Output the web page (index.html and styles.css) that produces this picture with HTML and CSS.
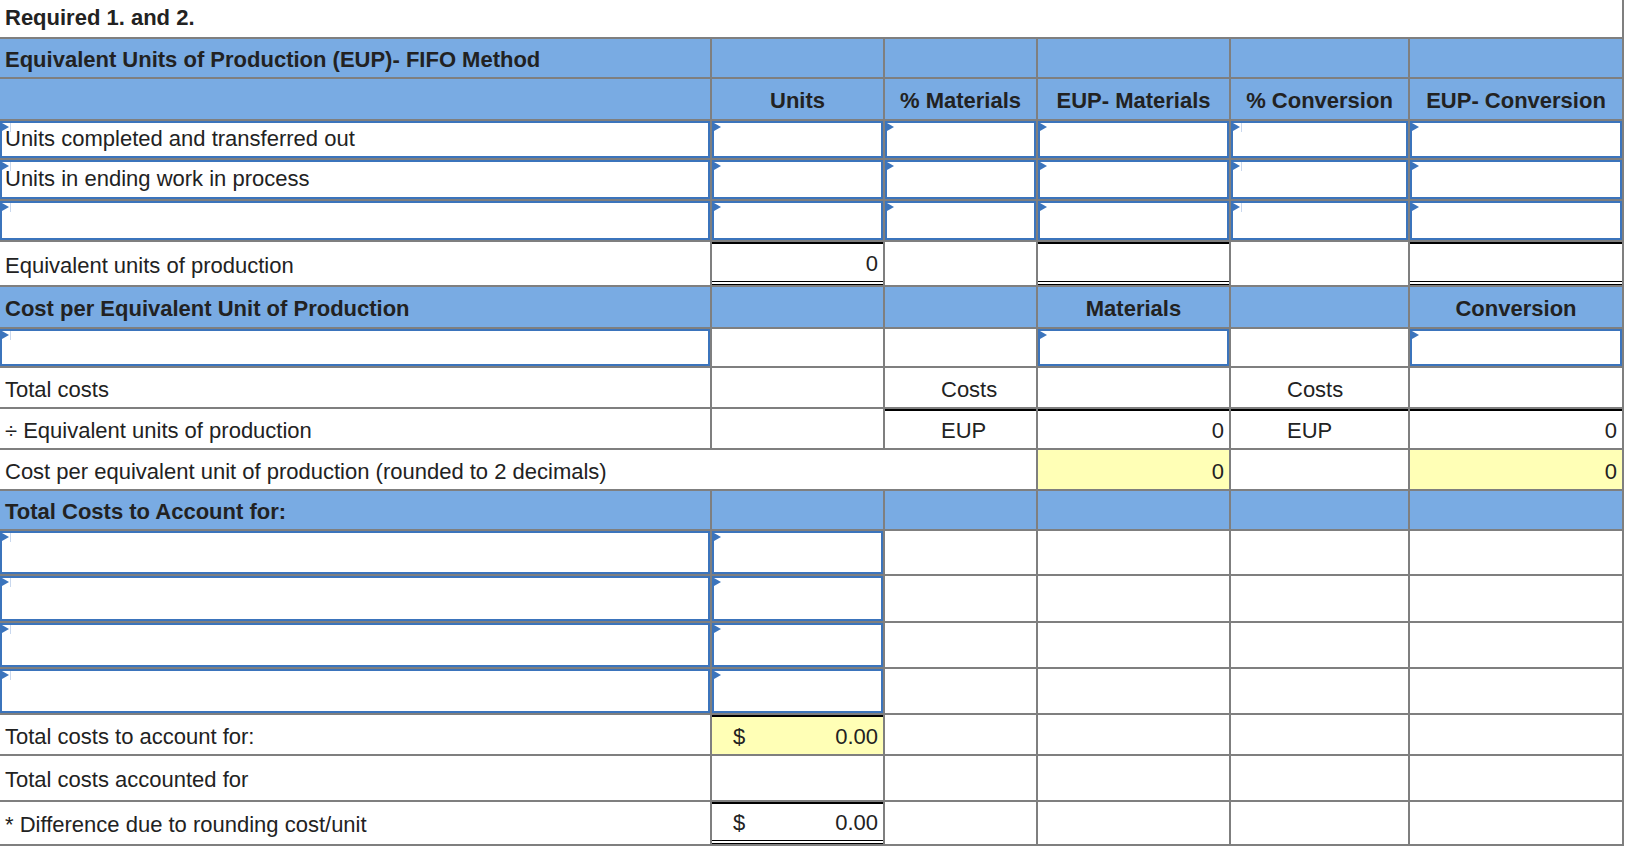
FILE: index.html
```html
<!DOCTYPE html>
<html lang="en">
<head>
<meta charset="utf-8">
<title>Equivalent Units of Production (EUP) - FIFO Method</title>
<link rel="stylesheet" href="styles.css">
</head>
<body>
<div class="sheet">
  <!-- title -->
  <div class="c b title">Required 1. and 2.</div>

  <!-- header 1 -->
  <div class="c h b">Equivalent Units of Production (EUP)- FIFO Method</div>
  <div class="c h"></div><div class="c h"></div><div class="c h"></div><div class="c h"></div><div class="c h"></div>

  <!-- header 2 -->
  <div class="c h"></div>
  <div class="c h b ctr">Units</div>
  <div class="c h b ctr">% Materials</div>
  <div class="c h b ctr">EUP- Materials</div>
  <div class="c h b ctr">% Conversion</div>
  <div class="c h b ctr">EUP- Conversion</div>

  <!-- input rows -->
  <div class="c in caret"><span class="tri"></span>Units completed and transferred out</div>
  <div class="c in"><span class="tri"></span></div>
  <div class="c in"><span class="tri"></span></div>
  <div class="c in"><span class="tri"></span></div>
  <div class="c in caret"><span class="tri"></span></div>
  <div class="c in"><span class="tri"></span></div>

  <div class="c in caret"><span class="tri"></span>Units in ending work in process</div>
  <div class="c in"><span class="tri"></span></div>
  <div class="c in"><span class="tri"></span></div>
  <div class="c in"><span class="tri"></span></div>
  <div class="c in caret"><span class="tri"></span></div>
  <div class="c in"><span class="tri"></span></div>

  <div class="c in caret"><span class="tri"></span></div>
  <div class="c in"><span class="tri"></span></div>
  <div class="c in"><span class="tri"></span></div>
  <div class="c in"><span class="tri"></span></div>
  <div class="c in caret"><span class="tri"></span></div>
  <div class="c in"><span class="tri"></span></div>

  <!-- EUP total -->
  <div class="c">Equivalent units of production</div>
  <div class="c r tl dbl">0</div>
  <div class="c"></div>
  <div class="c tl dbl"></div>
  <div class="c"></div>
  <div class="c tl dbl"></div>

  <!-- Cost per EUP header -->
  <div class="c h b">Cost per Equivalent Unit of Production</div>
  <div class="c h"></div>
  <div class="c h"></div>
  <div class="c h b ctr">Materials</div>
  <div class="c h"></div>
  <div class="c h b ctr">Conversion</div>

  <div class="c in caret"><span class="tri"></span></div>
  <div class="c"></div>
  <div class="c"></div>
  <div class="c in"><span class="tri"></span></div>
  <div class="c"></div>
  <div class="c in"><span class="tri"></span></div>

  <div class="c">Total costs</div>
  <div class="c"></div>
  <div class="c lab">Costs</div>
  <div class="c"></div>
  <div class="c lab">Costs</div>
  <div class="c"></div>

  <div class="c">÷ Equivalent units of production</div>
  <div class="c"></div>
  <div class="c lab tl">EUP</div>
  <div class="c r tl">0</div>
  <div class="c lab tl">EUP</div>
  <div class="c r tl">0</div>

  <div class="c span3">Cost per equivalent unit of production (rounded to 2 decimals)</div>
  <div class="c r y">0</div>
  <div class="c"></div>
  <div class="c r y">0</div>

  <!-- Total costs to account for -->
  <div class="c h b">Total Costs to Account for:</div>
  <div class="c h"></div><div class="c h"></div><div class="c h"></div><div class="c h"></div><div class="c h"></div>

  <div class="c in caret"><span class="tri"></span></div>
  <div class="c in"><span class="tri"></span></div>
  <div class="c"></div><div class="c"></div><div class="c"></div><div class="c"></div>

  <div class="c in caret"><span class="tri"></span></div>
  <div class="c in"><span class="tri"></span></div>
  <div class="c"></div><div class="c"></div><div class="c"></div><div class="c"></div>

  <div class="c in caret"><span class="tri"></span></div>
  <div class="c in"><span class="tri"></span></div>
  <div class="c"></div><div class="c"></div><div class="c"></div><div class="c"></div>

  <div class="c in caret"><span class="tri"></span></div>
  <div class="c in"><span class="tri"></span></div>
  <div class="c"></div><div class="c"></div><div class="c"></div><div class="c"></div>

  <div class="c">Total costs to account for:</div>
  <div class="c money y tl"><span>$</span><span>0.00</span></div>
  <div class="c"></div><div class="c"></div><div class="c"></div><div class="c"></div>

  <div class="c">Total costs accounted for</div>
  <div class="c"></div>
  <div class="c"></div><div class="c"></div><div class="c"></div><div class="c"></div>

  <div class="c">* Difference due to rounding cost/unit</div>
  <div class="c money tl dbl"><span>$</span><span>0.00</span></div>
  <div class="c"></div><div class="c"></div><div class="c"></div><div class="c"></div>
</div>
</body>
</html>
```

FILE: styles.css
```css
html, body {
  margin: 0;
  padding: 0;
  background: #ffffff;
}

body {
  font-family: "Liberation Sans", Arial, Helvetica, sans-serif;
  font-size: 22px;
  color: #222222;
}

.sheet {
  display: grid;
  width: 1622px;
  grid-template-columns: 710px 171px 151px 191px 177px 212px;
  grid-template-rows: 37px 38px 40px 37px 39px 39px 43px 40px 37px 39px 39px 39px 38px 43px 45px 44px 44px 39px 44px 42px;
  gap: 2px;
  background: #7f7f7f;
  border-right: 2px solid #7f7f7f;
  border-bottom: 2px solid #7f7f7f;
}

.c {
  background: #ffffff;
  display: flex;
  align-items: center;
  padding: 4px 5px 0 5px;
  box-sizing: border-box;
  white-space: nowrap;
  position: relative;
  min-width: 0;
}

.title {
  grid-column: 1 / -1;
  padding-top: 0;
  padding-bottom: 2px;
}

.span3 {
  grid-column: span 3;
}

.h {
  background: #79abe3;
}

.b {
  font-weight: bold;
}

.ctr {
  justify-content: center;
}

.r {
  justify-content: flex-end;
}

.y {
  background: #ffffb6;
}

.lab {
  padding-left: 56px;
}

.tl {
  border-top: 2px solid #000000;
  padding-top: 2px;
}

.dbl {
  border-bottom: 4px double #000000;
}

.money {
  justify-content: space-between;
  padding-left: 21px;
}

.in {
  border: 2px solid #3b74bc;
  padding: 0 5px 2px 3px;
}

.tri {
  position: absolute;
  left: 0;
  top: 0;
  width: 0;
  height: 0;
  border-top: 4px solid transparent;
  border-bottom: 4px solid transparent;
  border-left: 7px solid #3b74bc;
}

.caret::after {
  content: "";
  position: absolute;
  left: 8px;
  top: 0;
  width: 1px;
  height: 9px;
  background: #c9d8ee;
}
```
